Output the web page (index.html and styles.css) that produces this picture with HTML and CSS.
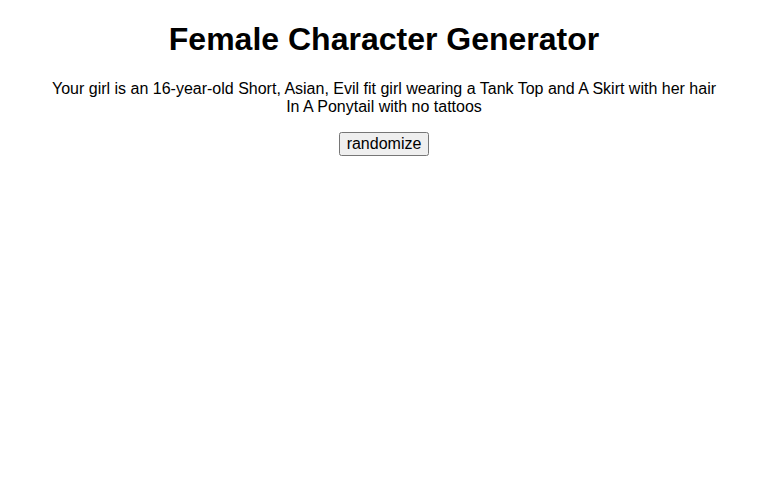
FILE: index.html
```html
<!DOCTYPE html>
<html lang="en">

<head>
    <meta charset="UTF-8">
    <meta name="viewport" content="width=device-width, initial-scale=1.0">
    <title>Female Character Generator</title>
    <link rel="stylesheet" href="styles.css">
</head>

<body>
    <div class="generator">
        <h1>Female Character Generator</h1>
        <p id="description">Your girl is an 16-year-old Short, Asian, Evil fit girl wearing a Tank Top and A Skirt with her hair In A Ponytail with no tattoos</p>
        <button id="randomizeButton" class="randomize-button">randomize</button>
    </div>
</body>

</html>
```

FILE: styles.css
```css
body {
    font-family: "Liberation Sans", Arial, sans-serif;
    margin: 0;
    background-color: #fff;
    color: #000;
}

.generator {
    text-align: center;
}

h1 {
    font-size: 32px;
    margin: 21px 0 22px;
}

p {
    font-size: 16px;
    max-width: 680px;
    margin: 16px auto;
}

.randomize-button {
    font-family: "Liberation Sans", Arial, sans-serif;
    font-size: 16px;
    padding: 1px 6px;
}
```
